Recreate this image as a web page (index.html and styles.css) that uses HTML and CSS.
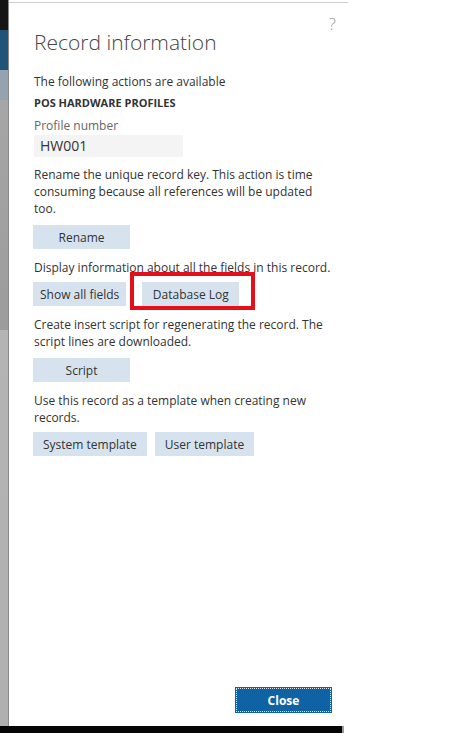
FILE: index.html
```html
<!doctype html>
<html lang="en">
  <head>
    <meta charset="UTF-8" />
    <meta name="viewport" content="width=device-width, initial-scale=1.0" />
    <title>Record information</title>
    <link rel="stylesheet" href="styles.css">
  </head>
  <body>
    <div class="screen">
      <div class="backdrop"></div>

      <div class="panel">
        <div class="panel-header">
          <h1>Record information</h1>
          <span class="help">?</span>
        </div>

        <p class="intro">The following actions are available</p>
        <div class="table-name">POS HARDWARE PROFILES</div>

        <label class="field-label">Profile number</label>
        <div class="field-value">HW001</div>

        <p class="first">Rename the unique record key. This action is time consuming because all references will be updated too.</p>
        <div class="actions">
          <button class="btn">Rename</button>
        </div>

        <p>Display information about all the fields in this record.</p>
        <div class="actions tight">
          <button class="btn btn-fit">Show all fields</button>
          <button class="btn highlight">Database Log</button>
        </div>

        <p>Create insert script for regenerating the record. The script lines are downloaded.</p>
        <div class="actions">
          <button class="btn">Script</button>
        </div>

        <p>Use this record as a template when creating new records.</p>
        <div class="actions tight">
          <button class="btn">System template</button>
          <button class="btn">User template</button>
        </div>

        <div class="panel-footer">
          <button class="btn-primary">Close</button>
        </div>
      </div>

      <div class="taskbar"></div>
    </div>
  </body>
</html>
```

FILE: styles.css
```css
html, body {
  margin: 0;
  padding: 0;
  background: white;
}
body {
  font-family: "Open Sans", "Noto Sans", sans-serif;
  color: #333;
  font-size: 12px;
}
.screen {
  display: grid;
  grid-template-columns: 9px 339px 1fr;
  grid-template-rows: 1fr 7px;
  height: 733px;
}
.backdrop {
  grid-column: 1;
  grid-row: 1;
  border-right: 1px solid #8a8a8a;
  background: linear-gradient(
    to bottom,
    #151515 0, #151515 30px,
    #1f5478 30px, #1f5478 70px,
    #93a4b0 70px, #93a4b0 100px,
    #a6a6a6 100px, #9c9c9c 330px,
    #b4b4b4 330px, #b0b0b0 100%
  );
}
.panel {
  grid-column: 2;
  grid-row: 1;
  margin-top: 2px;
  border-top: 1px solid #cfcfcf;
  padding: 9px 0 0 25px;
  display: flex;
  flex-direction: column;
  background: white;
}
.panel-header {
  display: flex;
  justify-content: space-between;
  align-items: flex-start;
  padding-right: 12px;
}
h1 {
  margin: 16px 0 0;
  font-size: 21px;
  line-height: 28px;
  font-weight: 300;
  color: #444;
}
.help {
  margin-top: 2px;
  font-size: 17px;
  line-height: 20px;
  font-weight: 300;
  color: #999;
}
p {
  margin: 10px 0 0;
  line-height: 17px;
  padding-right: 16px;
}
p.intro {
  margin-top: 17px;
}
p.first {
  margin-top: 9px;
}
.table-name {
  margin-top: 4px;
  line-height: 17px;
  font-weight: 700;
  font-size: 11px;
}
.field-label {
  display: block;
  margin-top: 6px;
  line-height: 17px;
  color: #666;
}
.field-value {
  width: 143px;
  height: 22px;
  margin-top: 1px;
  padding-left: 6px;
  background: #f4f4f4;
  font-size: 14px;
  line-height: 22px;
}
.actions {
  display: flex;
  gap: 8px;
  margin-top: 8px;
  margin-left: -1px;
}
.actions.tight {
  margin-top: 6px;
}
.btn {
  min-width: 97px;
  height: 24px;
  padding: 0 10px;
  border: none;
  background: #d6e3ef;
  color: #333;
  font-family: inherit;
  font-size: 12px;
}
.btn-fit {
  min-width: 0;
  padding: 0 7px;
}
.highlight {
  position: relative;
  margin-left: 8px;
}
.highlight::after {
  content: "";
  position: absolute;
  top: -10px;
  left: -12px;
  right: -16px;
  bottom: -4px;
  border: 4px solid #e3101c;
}
.panel-footer {
  margin-top: auto;
  display: flex;
  justify-content: flex-end;
  padding: 0 16px 13px 0;
}
.btn-primary {
  width: 97px;
  height: 26px;
  border: none;
  background: #0f63a5;
  color: white;
  font-family: inherit;
  font-weight: 700;
  font-size: 12px;
  outline: 1px dotted #d8e6f2;
  outline-offset: -2px;
}
.taskbar {
  grid-column: 1 / 3;
  grid-row: 2;
  margin-right: 4px;
  background: #050505;
  border-right: 2px solid #9a9a9a;
}
```
